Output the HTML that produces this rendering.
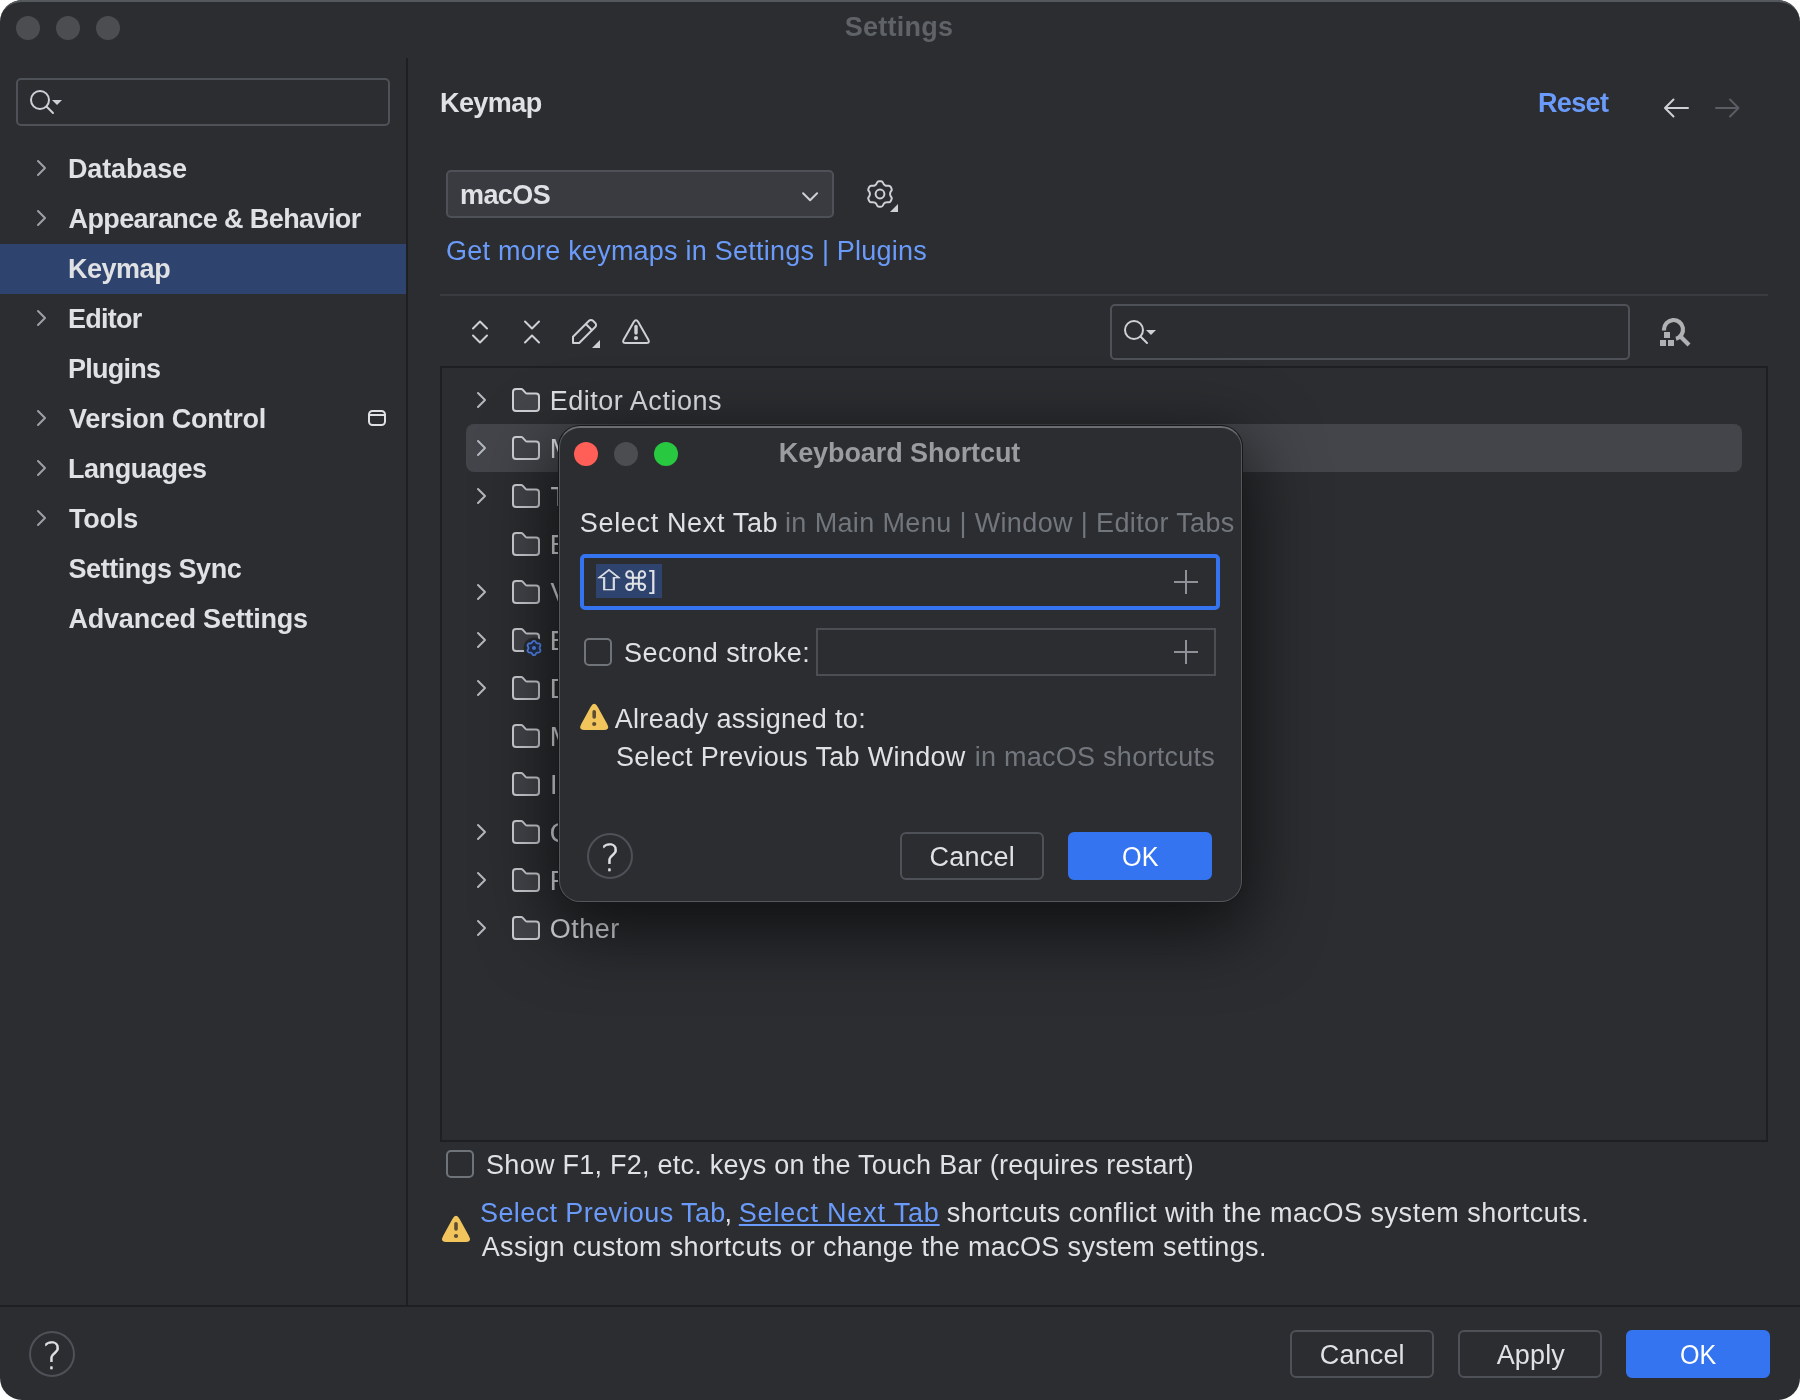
<!DOCTYPE html>
<html lang="en">
<head>
<meta charset="utf-8">
<title>Settings</title>
<style>
html,body{margin:0;padding:0;background:#fff;}
body{width:1800px;height:1400px;position:relative;overflow:hidden;font-family:"Liberation Sans",sans-serif;}
#win{position:absolute;left:0;top:0;width:1800px;height:1400px;background:#2b2d30;border-radius:22px;overflow:hidden;will-change:transform;}
#win:before{content:"";position:absolute;left:0;top:0;right:0;bottom:0;border-radius:22px;border-top:2px solid #55585c;pointer-events:none;z-index:50;}
.abs{position:absolute;}
.t{position:absolute;white-space:pre;}
.q{font:200 37px/46px 'DejaVu Sans',sans-serif;color:#dfe1e5;-webkit-text-stroke:.45px #dfe1e5;}
.k{position:absolute;display:block;}
.dot{position:absolute;width:24px;height:24px;border-radius:50%;}
.field{position:absolute;box-sizing:border-box;border:2px solid #4e5157;border-radius:5px;}
.btn{position:absolute;box-sizing:border-box;border:2px solid #4e5157;border-radius:6px;width:144px;height:48px;}
.btn.def{background:#3574f0;border-color:#3574f0;}
.cb{position:absolute;box-sizing:border-box;width:28px;height:28px;border:2px solid #6f737a;border-radius:5px;}
svg{position:absolute;overflow:visible;}
#dlg{position:absolute;left:559px;top:426px;width:683px;height:476px;box-sizing:border-box;background:#2b2d30;border:1.5px solid #54575c;border-top:2px solid #6a6d72;border-radius:21px;box-shadow:0 0 0 1px #17181a,0 22px 70px 8px rgba(0,0,0,.62);}
</style>
</head>
<body>
<div id="win">
  <!-- title bar -->
  <div class="dot" style="left:16px;top:16px;background:#4b4d51"></div>
  <div class="dot" style="left:56px;top:16px;background:#4b4d51"></div>
  <div class="dot" style="left:96px;top:16px;background:#4b4d51"></div>

  <!-- sidebar -->
  <div class="field" style="left:16px;top:78px;width:374px;height:48px;"></div>
  <div class="abs" style="left:0;top:244px;width:406px;height:50px;background:#2e436e"></div>
  <div class="abs" style="left:406px;top:58px;width:2px;height:1248px;background:#1e1f22"></div>

  <!-- header -->

  <div class="field" style="left:446px;top:170px;width:388px;height:48px;background:#393b40"></div>
  <div class="abs" style="left:440px;top:294px;width:1328px;height:2px;background:#393b40"></div>

  <!-- toolbar -->
  <div class="field" style="left:1110px;top:304px;width:520px;height:56px;"></div>

  <!-- tree -->
  <div class="abs" style="left:440px;top:366px;width:1328px;height:776px;box-sizing:border-box;border:2px solid #1e1f22;"></div>
  <div class="abs" style="left:466px;top:424px;width:1276px;height:48px;background:#43454a;border-radius:8px"></div>

  <!-- bottom -->
  <div class="cb" style="left:446px;top:1150px"></div>
  <div class="abs" style="left:0;top:1305px;width:1800px;height:2px;background:#1e1f22"></div>
  <div class="abs" style="left:29px;top:1331px;width:46px;height:46px;box-sizing:border-box;border:2px solid #4e5157;border-radius:50%"></div>
  <div class="btn" style="left:1290px;top:1330px"></div>
  <div class="btn" style="left:1458px;top:1330px"></div>
  <div class="btn def" style="left:1626px;top:1330px"></div>

<div class="t q" style="left:42.5px;top:1334px">?</div>
<svg width="1800" height="1400" viewBox="0 0 1800 1400" style="left:0;top:0"><g fill="none" stroke="#ced0d6" stroke-width="2"><circle cx="40" cy="100" r="9"/><path d="M46.5 106.5l6.5 6.5" stroke-linecap="round"/></g><path d="M52 100h10l-5 5z" fill="#ced0d6"/>
<g fill="none" stroke="#ced0d6" stroke-width="2"><circle cx="1134" cy="330" r="9"/><path d="M1140.5 336.5l6.5 6.5" stroke-linecap="round"/></g><path d="M1146 330h10l-5 5z" fill="#ced0d6"/>
<path d="M38.0 161l7 7-7 7" fill="none" stroke="#9da0a8" stroke-width="2" stroke-linecap="round" stroke-linejoin="round"/>
<path d="M38.0 211l7 7-7 7" fill="none" stroke="#9da0a8" stroke-width="2" stroke-linecap="round" stroke-linejoin="round"/>
<path d="M38.0 311l7 7-7 7" fill="none" stroke="#9da0a8" stroke-width="2" stroke-linecap="round" stroke-linejoin="round"/>
<path d="M38.0 411l7 7-7 7" fill="none" stroke="#9da0a8" stroke-width="2" stroke-linecap="round" stroke-linejoin="round"/>
<path d="M38.0 461l7 7-7 7" fill="none" stroke="#9da0a8" stroke-width="2" stroke-linecap="round" stroke-linejoin="round"/>
<path d="M38.0 511l7 7-7 7" fill="none" stroke="#9da0a8" stroke-width="2" stroke-linecap="round" stroke-linejoin="round"/>
<g fill="none" stroke="#dfe1e5" stroke-width="2"><rect x="369" y="411" width="16" height="14" rx="3.5"/><path d="M369 415h16"/></g>
<path d="M1688 108H1665.500M1673.500 99.500l-8.500 8.500 8.500 8.500" fill="none" stroke="#ced0d6" stroke-width="2" stroke-linecap="round" stroke-linejoin="round"/>
<path d="M1716 108h22.500M1730 99.500l8.500 8.500-8.500 8.500" fill="none" stroke="#5a5d63" stroke-width="2" stroke-linecap="round" stroke-linejoin="round"/>
<path d="M803.100 193.200l7 7 7-7" fill="none" stroke="#ced0d6" stroke-width="2" stroke-linecap="round" stroke-linejoin="round"/>
<path d="M883.03 182.74Q882.48 181.24 880.88 181.24L879.12 181.24Q877.52 181.24 876.97 182.74L876.89 182.97Q876.34 184.48 874.96 185.28L874.96 185.28Q873.58 186.07 872.01 185.79L871.76 185.75Q870.19 185.47 869.39 186.86L868.51 188.38Q867.71 189.77 868.74 190.99L868.90 191.18Q869.93 192.40 869.93 194.00L869.93 194.00Q869.93 195.60 868.90 196.82L868.74 197.01Q867.71 198.23 868.51 199.62L869.39 201.14Q870.19 202.53 871.76 202.25L872.01 202.21Q873.58 201.93 874.96 202.72L874.96 202.72Q876.34 203.52 876.89 205.03L876.97 205.26Q877.52 206.76 879.12 206.76L880.88 206.76Q882.48 206.76 883.03 205.26L883.11 205.03Q883.66 203.52 885.04 202.72L885.04 202.72Q886.42 201.93 887.99 202.21L888.24 202.25Q889.81 202.53 890.61 201.14L891.49 199.62Q892.29 198.23 891.26 197.01L891.10 196.82Q890.07 195.60 890.07 194.00L890.07 194.00Q890.07 192.40 891.10 191.18L891.26 190.99Q892.29 189.77 891.49 188.38L890.61 186.86Q889.81 185.47 888.24 185.75L887.99 185.79Q886.42 186.07 885.04 185.28L885.04 185.28Q883.66 184.48 883.11 182.97Z" fill="none" stroke="#ced0d6" stroke-width="2" stroke-linejoin="round"/><circle cx="880" cy="194" r="4.4" fill="none" stroke="#ced0d6" stroke-width="2"/>
<path d="M898 204v8h-8z" fill="#ced0d6"/>
<path d="M473 328.5l7-7 7 7M487 335.5l-7 7-7-7" fill="none" stroke="#ced0d6" stroke-width="2" stroke-linecap="round" stroke-linejoin="round"/>
<path d="M525 321.5l7 7 7-7M539 342.5l-7-7-7 7" fill="none" stroke="#ced0d6" stroke-width="2" stroke-linecap="round" stroke-linejoin="round"/>
<g transform="translate(568 316) scale(2)" fill="none" stroke="#ced0d6" stroke-width="1" stroke-linejoin="round"><path d="M2.500 13.500V10.400L10.500 2.400a1.400 1.400 0 0 1 2 0l1.100 1.100a1.400 1.400 0 0 1 0 2L5.600 13.500Z"/><path d="M8.900 4l3.100 3.100"/></g>
<path d="M600 340v8h-8z" fill="#ced0d6"/>
<path d="M633.76 322.11Q636.00 318.20 638.24 322.11L648.21 339.53Q650.20 343.00 646.20 343.00L625.80 343.00Q621.80 343.00 623.79 339.53Z" fill="none" stroke="#ced0d6" stroke-width="2" stroke-linejoin="round"/><path d="M636 326.5v6.500" stroke="#ced0d6" stroke-width="3.400" stroke-linecap="round" fill="none"/><circle cx="636" cy="338" r="2.100" fill="#ced0d6"/>
<g fill="none" stroke="#afb1b3" stroke-width="4.200"><path d="M1664.0 330.5V329.5A9.5 9.5 0 1 1 1675.96 338.68"/><path d="M1679.500 335.500L1689 345"/></g>
<g fill="#afb1b3"><rect x="1664" y="332" width="6" height="6"/><rect x="1660" y="340" width="6" height="6"/><rect x="1668" y="340" width="6" height="6"/></g>
<path d="M478.0 393l7 7-7 7" fill="none" stroke="#b4b8bf" stroke-width="2" stroke-linecap="round" stroke-linejoin="round"/>
<path d="M513 392a3 3 0 0 1 3-3H521.2a2 2 0 0 1 1.4 .6L525.6 392.9a2 2 0 0 0 1.4 .6H536a3 3 0 0 1 3 3V408a3 3 0 0 1-3 3H516a3 3 0 0 1-3-3Z" fill="#43454a" stroke="#ced0d6" stroke-width="2" stroke-linejoin="round"/>
<path d="M478.0 441l7 7-7 7" fill="none" stroke="#b4b8bf" stroke-width="2" stroke-linecap="round" stroke-linejoin="round"/>
<path d="M513 440a3 3 0 0 1 3-3H521.2a2 2 0 0 1 1.4 .6L525.6 440.9a2 2 0 0 0 1.4 .6H536a3 3 0 0 1 3 3V456a3 3 0 0 1-3 3H516a3 3 0 0 1-3-3Z" fill="#43454a" stroke="#ced0d6" stroke-width="2" stroke-linejoin="round"/>
<path d="M478.0 489l7 7-7 7" fill="none" stroke="#b4b8bf" stroke-width="2" stroke-linecap="round" stroke-linejoin="round"/>
<path d="M513 488a3 3 0 0 1 3-3H521.2a2 2 0 0 1 1.4 .6L525.6 488.9a2 2 0 0 0 1.4 .6H536a3 3 0 0 1 3 3V504a3 3 0 0 1-3 3H516a3 3 0 0 1-3-3Z" fill="#43454a" stroke="#ced0d6" stroke-width="2" stroke-linejoin="round"/>
<path d="M513 536a3 3 0 0 1 3-3H521.2a2 2 0 0 1 1.4 .6L525.6 536.9a2 2 0 0 0 1.4 .6H536a3 3 0 0 1 3 3V552a3 3 0 0 1-3 3H516a3 3 0 0 1-3-3Z" fill="#43454a" stroke="#ced0d6" stroke-width="2" stroke-linejoin="round"/>
<path d="M478.0 585l7 7-7 7" fill="none" stroke="#b4b8bf" stroke-width="2" stroke-linecap="round" stroke-linejoin="round"/>
<path d="M513 584a3 3 0 0 1 3-3H521.2a2 2 0 0 1 1.4 .6L525.6 584.9a2 2 0 0 0 1.4 .6H536a3 3 0 0 1 3 3V600a3 3 0 0 1-3 3H516a3 3 0 0 1-3-3Z" fill="#43454a" stroke="#ced0d6" stroke-width="2" stroke-linejoin="round"/>
<path d="M478.0 633l7 7-7 7" fill="none" stroke="#b4b8bf" stroke-width="2" stroke-linecap="round" stroke-linejoin="round"/>
<path d="M513 632a3 3 0 0 1 3-3H521.2a2 2 0 0 1 1.4 .6L525.6 632.9a2 2 0 0 0 1.4 .6H536a3 3 0 0 1 3 3V648a3 3 0 0 1-3 3H516a3 3 0 0 1-3-3Z" fill="#43454a" stroke="#ced0d6" stroke-width="2" stroke-linejoin="round"/>
<circle cx="534" cy="648" r="10.500" fill="#2b2d30"/>
<path d="M535.69 641.85Q535.37 640.93 534.37 640.93L533.63 640.93Q532.63 640.93 532.31 641.85L532.31 641.85Q531.99 642.77 531.23 643.21L531.23 643.21Q530.48 643.65 529.52 643.46L529.52 643.46Q528.57 643.28 528.07 644.14L527.69 644.79Q527.19 645.66 527.83 646.39L527.83 646.39Q528.47 647.12 528.47 648.00L528.47 648.00Q528.47 648.88 527.83 649.61L527.83 649.61Q527.19 650.34 527.69 651.21L528.07 651.86Q528.57 652.72 529.52 652.54L529.52 652.54Q530.48 652.35 531.23 652.79L531.23 652.79Q531.99 653.23 532.31 654.15L532.31 654.15Q532.63 655.07 533.63 655.07L534.37 655.07Q535.37 655.07 535.69 654.15L535.69 654.15Q536.01 653.23 536.77 652.79L536.77 652.79Q537.52 652.35 538.48 652.54L538.48 652.54Q539.43 652.72 539.93 651.86L540.31 651.21Q540.81 650.34 540.17 649.61L540.17 649.61Q539.53 648.88 539.53 648.00L539.53 648.00Q539.53 647.12 540.17 646.39L540.17 646.39Q540.81 645.66 540.31 644.79L539.93 644.14Q539.43 643.28 538.48 643.46L538.48 643.46Q537.52 643.65 536.77 643.21L536.77 643.21Q536.01 642.77 535.69 641.85Z" fill="#25324d" stroke="#548af7" stroke-width="1.800" stroke-linejoin="round"/><circle cx="534" cy="648" r="2" fill="#548af7"/>
<path d="M478.0 681l7 7-7 7" fill="none" stroke="#b4b8bf" stroke-width="2" stroke-linecap="round" stroke-linejoin="round"/>
<path d="M513 680a3 3 0 0 1 3-3H521.2a2 2 0 0 1 1.4 .6L525.6 680.9a2 2 0 0 0 1.4 .6H536a3 3 0 0 1 3 3V696a3 3 0 0 1-3 3H516a3 3 0 0 1-3-3Z" fill="#43454a" stroke="#ced0d6" stroke-width="2" stroke-linejoin="round"/>
<path d="M513 728a3 3 0 0 1 3-3H521.2a2 2 0 0 1 1.4 .6L525.6 728.9a2 2 0 0 0 1.4 .6H536a3 3 0 0 1 3 3V744a3 3 0 0 1-3 3H516a3 3 0 0 1-3-3Z" fill="#43454a" stroke="#ced0d6" stroke-width="2" stroke-linejoin="round"/>
<path d="M513 776a3 3 0 0 1 3-3H521.2a2 2 0 0 1 1.4 .6L525.6 776.9a2 2 0 0 0 1.4 .6H536a3 3 0 0 1 3 3V792a3 3 0 0 1-3 3H516a3 3 0 0 1-3-3Z" fill="#43454a" stroke="#ced0d6" stroke-width="2" stroke-linejoin="round"/>
<path d="M478.0 825l7 7-7 7" fill="none" stroke="#b4b8bf" stroke-width="2" stroke-linecap="round" stroke-linejoin="round"/>
<path d="M513 824a3 3 0 0 1 3-3H521.2a2 2 0 0 1 1.4 .6L525.6 824.9a2 2 0 0 0 1.4 .6H536a3 3 0 0 1 3 3V840a3 3 0 0 1-3 3H516a3 3 0 0 1-3-3Z" fill="#43454a" stroke="#ced0d6" stroke-width="2" stroke-linejoin="round"/>
<path d="M478.0 873l7 7-7 7" fill="none" stroke="#b4b8bf" stroke-width="2" stroke-linecap="round" stroke-linejoin="round"/>
<path d="M513 872a3 3 0 0 1 3-3H521.2a2 2 0 0 1 1.4 .6L525.6 872.9a2 2 0 0 0 1.4 .6H536a3 3 0 0 1 3 3V888a3 3 0 0 1-3 3H516a3 3 0 0 1-3-3Z" fill="#43454a" stroke="#ced0d6" stroke-width="2" stroke-linejoin="round"/>
<path d="M478.0 921l7 7-7 7" fill="none" stroke="#b4b8bf" stroke-width="2" stroke-linecap="round" stroke-linejoin="round"/>
<path d="M513 920a3 3 0 0 1 3-3H521.2a2 2 0 0 1 1.4 .6L525.6 920.9a2 2 0 0 0 1.4 .6H536a3 3 0 0 1 3 3V936a3 3 0 0 1-3 3H516a3 3 0 0 1-3-3Z" fill="#43454a" stroke="#ced0d6" stroke-width="2" stroke-linejoin="round"/>
<path d="M452.39 1218.97Q456.00 1212.40 459.61 1218.97L468.93 1235.96Q472.30 1242.10 465.30 1242.10L446.70 1242.10Q439.70 1242.10 443.07 1235.96Z" fill="#f2c55c"/><path d="M456 1223.8v5.2" stroke="#5e4d33" stroke-width="3.6" stroke-linecap="round" fill="none"/><circle cx="456" cy="1236" r="2.1" fill="#5e4d33"/></svg>
<div class="t" style="left:844.80px;top:14.14px;font-size:27px;line-height:27px;color:#5f6267;font-weight:700;letter-spacing:0.257px;">Settings</div>
<div class="t" style="left:67.90px;top:156.14px;font-size:27px;line-height:27px;color:#dfe1e5;font-weight:700;letter-spacing:-0.123px;">Database</div>
<div class="t" style="left:68.50px;top:206.14px;font-size:27px;line-height:27px;color:#dfe1e5;font-weight:700;letter-spacing:-0.595px;">Appearance &amp; Behavior</div>
<div class="t" style="left:67.90px;top:256.14px;font-size:27px;line-height:27px;color:#dfe1e5;font-weight:700;letter-spacing:-0.451px;">Keymap</div>
<div class="t" style="left:67.90px;top:306.14px;font-size:27px;line-height:27px;color:#dfe1e5;font-weight:700;letter-spacing:-0.739px;">Editor</div>
<div class="t" style="left:67.90px;top:356.14px;font-size:27px;line-height:27px;color:#dfe1e5;font-weight:700;letter-spacing:-0.750px;">Plugins</div>
<div class="t" style="left:68.90px;top:406.14px;font-size:27px;line-height:27px;color:#dfe1e5;font-weight:700;letter-spacing:-0.259px;">Version Control</div>
<div class="t" style="left:67.90px;top:456.14px;font-size:27px;line-height:27px;color:#dfe1e5;font-weight:700;letter-spacing:-0.414px;">Languages</div>
<div class="t" style="left:68.90px;top:506.14px;font-size:27px;line-height:27px;color:#dfe1e5;font-weight:700;letter-spacing:-0.146px;">Tools</div>
<div class="t" style="left:68.50px;top:556.14px;font-size:27px;line-height:27px;color:#dfe1e5;font-weight:700;letter-spacing:-0.444px;">Settings Sync</div>
<div class="t" style="left:68.50px;top:606.14px;font-size:27px;line-height:27px;color:#dfe1e5;font-weight:700;letter-spacing:-0.215px;">Advanced Settings</div>
<div class="t" style="left:440.00px;top:90.14px;font-size:27px;line-height:27px;color:#dfe1e5;font-weight:700;letter-spacing:-0.571px;">Keymap</div>
<div class="t" style="left:1538.00px;top:90.14px;font-size:27px;line-height:27px;color:#6b9bfa;font-weight:700;letter-spacing:-0.664px;">Reset</div>
<div class="t" style="left:460.00px;top:182.14px;font-size:27px;line-height:27px;color:#dfe1e5;font-weight:700;letter-spacing:-0.588px;">macOS</div>
<div class="t" style="left:446.10px;top:238.14px;font-size:27px;line-height:27px;color:#6b9bfa;letter-spacing:0.229px;">Get more keymaps in Settings | Plugins</div>
<div class="t" style="left:549.70px;top:388.14px;font-size:27px;line-height:27px;color:#dfe1e5;letter-spacing:0.516px;">Editor Actions</div>
<div class="t" style="left:549.70px;top:436.14px;font-size:27px;line-height:27px;color:#dfe1e5;letter-spacing:-1.283px;">Main Menu</div>
<div class="t" style="left:550.50px;top:484.14px;font-size:27px;line-height:27px;color:#dfe1e5;letter-spacing:-0.960px;">Tool Windows</div>
<div class="t" style="left:549.70px;top:532.14px;font-size:27px;line-height:27px;color:#dfe1e5;letter-spacing:-0.023px;">External Tools</div>
<div class="t" style="left:550.50px;top:580.14px;font-size:27px;line-height:27px;color:#dfe1e5;letter-spacing:-0.619px;">Version Control Systems</div>
<div class="t" style="left:549.70px;top:628.14px;font-size:27px;line-height:27px;color:#dfe1e5;letter-spacing:-0.515px;">External Build Systems</div>
<div class="t" style="left:549.70px;top:676.14px;font-size:27px;line-height:27px;color:#dfe1e5;letter-spacing:-0.489px;">Debugger Actions</div>
<div class="t" style="left:549.70px;top:724.14px;font-size:27px;line-height:27px;color:#dfe1e5;letter-spacing:-0.543px;">Macros</div>
<div class="t" style="left:550.00px;top:772.14px;font-size:27px;line-height:27px;color:#dfe1e5;letter-spacing:0.156px;">Intentions</div>
<div class="t" style="left:549.80px;top:820.14px;font-size:27px;line-height:27px;color:#dfe1e5;letter-spacing:0.165px;">Quick Lists</div>
<div class="t" style="left:549.70px;top:868.14px;font-size:27px;line-height:27px;color:#dfe1e5;letter-spacing:-0.294px;">Plugins</div>
<div class="t" style="left:549.80px;top:916.14px;font-size:27px;line-height:27px;color:#dfe1e5;letter-spacing:0.465px;">Other</div>
<div class="t" style="left:486.10px;top:1152.14px;font-size:27px;line-height:27px;color:#dfe1e5;letter-spacing:0.259px;">Show F1, F2, etc. keys on the Touch Bar (requires restart)</div>
<div class="t" style="left:480.00px;top:1200.14px;font-size:27px;line-height:27px;color:#6b9bfa;letter-spacing:0.399px;">Select Previous Tab</div>
<div class="t" style="left:724.50px;top:1200.14px;font-size:27px;line-height:27px;color:#dfe1e5;">,</div>
<div class="t" style="left:738.80px;top:1200.14px;font-size:27px;line-height:27px;color:#6b9bfa;letter-spacing:0.815px;"><span style="text-decoration:underline;text-underline-offset:2px;text-decoration-thickness:1.5px">Select Next Tab</span></div>
<div class="t" style="left:946.70px;top:1200.14px;font-size:27px;line-height:27px;color:#dfe1e5;letter-spacing:0.508px;">shortcuts conflict with the macOS system shortcuts.</div>
<div class="t" style="left:481.70px;top:1234.14px;font-size:27px;line-height:27px;color:#dfe1e5;letter-spacing:0.355px;">Assign custom shortcuts or change the macOS system settings.</div>
<div class="t" style="left:1319.80px;top:1342.14px;font-size:27px;line-height:27px;color:#dfe1e5;letter-spacing:0.150px;">Cancel</div>
<div class="t" style="left:1496.70px;top:1342.14px;font-size:27px;line-height:27px;color:#dfe1e5;letter-spacing:0.138px;">Apply</div>
<div class="t" style="left:1679.80px;top:1342.14px;font-size:27px;line-height:27px;color:#ffffff;transform:scaleX(0.9288);transform-origin:1.00px 0;">OK</div>

  <!-- dialog -->
  <div id="dlg"></div>
  <div class="dot" style="left:574px;top:442px;background:#ff5f57"></div>
  <div class="dot" style="left:614px;top:442px;background:#4b4d51"></div>
  <div class="dot" style="left:654px;top:442px;background:#28c840"></div>
  <div class="abs" style="left:580px;top:554px;width:640px;height:56px;box-sizing:border-box;border:4px solid #3574f0;border-radius:5px;"></div>
  <div class="abs" style="left:596px;top:564px;width:66px;height:34px;background:#2e436e"></div>
  <div class="t" style="left:596px;top:564px;width:66px;height:34px;color:#dfe1e5"><span class="k" style="left:-1px;top:-6.1px;font:400 28px/40px 'Noto Sans CJK JP','DejaVu Sans',sans-serif;-webkit-text-stroke:.7px #dfe1e5;transform:scale(1.16,.77);transform-origin:50% 56%">⇧</span><span class="k" style="left:26px;top:-3.4px;font:400 27.5px/40px 'DejaVu Sans',sans-serif">⌘</span><span class="k" style="left:53px;top:-4px;font:400 26px/40px 'Liberation Sans',sans-serif">]</span></div>
  <div class="cb" style="left:584px;top:638px"></div>
  <div class="field" style="left:816px;top:628px;width:400px;height:48px;border-color:#4b4e53;border-radius:0"></div>
  <div class="abs" style="left:587px;top:833px;width:46px;height:46px;box-sizing:border-box;border:2px solid #4e5157;border-radius:50%"></div>
  <div class="btn" style="left:900px;top:832px"></div>
  <div class="btn def" style="left:1068px;top:832px"></div>
<div class="t q" style="left:600.5px;top:836px">?</div>
<svg width="1800" height="1400" viewBox="0 0 1800 1400" style="left:0;top:0"><path d="M1186 570v24M1174 582h24" stroke="#8f9198" stroke-width="2" fill="none"/>
<path d="M1186 640v24M1174 652h24" stroke="#8f9198" stroke-width="2" fill="none"/>
<path d="M590.59 706.97Q594.20 700.40 597.81 706.97L607.13 723.96Q610.50 730.10 603.50 730.10L584.90 730.10Q577.90 730.10 581.27 723.96Z" fill="#f2c55c"/><path d="M594.2 711.8v5.2" stroke="#5e4d33" stroke-width="3.6" stroke-linecap="round" fill="none"/><circle cx="594.2" cy="724" r="2.1" fill="#5e4d33"/></svg>
<div class="t" style="left:778.80px;top:440.14px;font-size:27px;line-height:27px;color:#9b9c9f;font-weight:700;letter-spacing:-0.096px;">Keyboard Shortcut</div>
<div class="t" style="left:579.80px;top:510.14px;font-size:27px;line-height:27px;color:#dfe1e5;letter-spacing:0.658px;">Select Next Tab</div>
<div class="t" style="left:785.00px;top:510.14px;font-size:27px;line-height:27px;color:#72767d;letter-spacing:0.370px;">in Main Menu | Window | Editor Tabs</div>
<div class="t" style="left:624.00px;top:640.14px;font-size:27px;line-height:27px;color:#dfe1e5;letter-spacing:0.438px;">Second stroke:</div>
<div class="t" style="left:614.70px;top:706.14px;font-size:27px;line-height:27px;color:#dfe1e5;letter-spacing:0.334px;">Already assigned to:</div>
<div class="t" style="left:616.00px;top:744.14px;font-size:27px;line-height:27px;color:#dfe1e5;letter-spacing:0.305px;">Select Previous Tab Window</div>
<div class="t" style="left:974.80px;top:744.14px;font-size:27px;line-height:27px;color:#72767d;letter-spacing:0.254px;">in macOS shortcuts</div>
<div class="t" style="left:929.60px;top:844.14px;font-size:27px;line-height:27px;color:#dfe1e5;letter-spacing:0.210px;">Cancel</div>
<div class="t" style="left:1121.70px;top:844.14px;font-size:27px;line-height:27px;color:#ffffff;transform:scaleX(0.9340);transform-origin:1.00px 0;">OK</div>
</div>
</body>
</html>
